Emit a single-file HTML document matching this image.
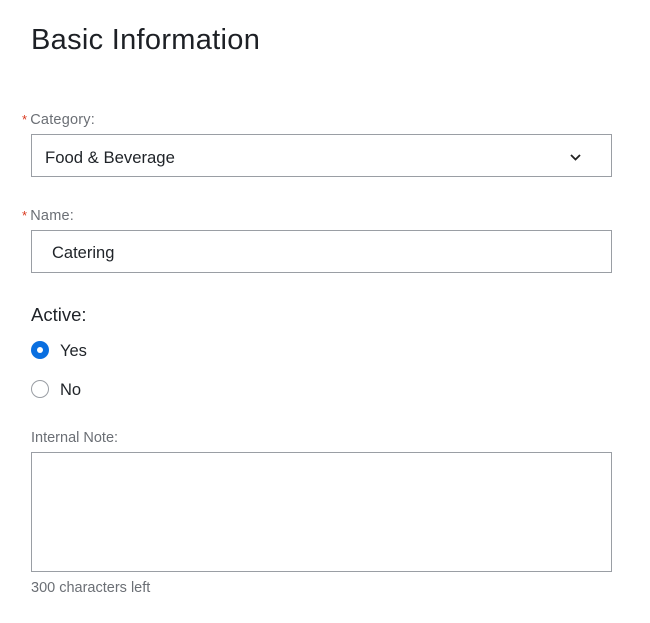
<!DOCTYPE html>
<html><head><style>
body{margin:0;background:#fff;font-family:"Liberation Sans",sans-serif;color:#1f2328;}
.a{position:absolute;}
.lbl{font-size:14.5px;color:#6b6f75;}
.req{color:#d9381e;font-size:13px;margin-right:3px;}
.box{position:absolute;left:31px;width:579px;border:1px solid #9a9ea4;background:#fff;}
</style></head><body>
<div class="a" style="left:31px;top:24px;font-size:29px;color:#1d2025;letter-spacing:0.3px;">Basic Information</div>
<div class="a lbl" style="left:22px;top:112px;letter-spacing:0.2px;"><span class="req">*</span>Category:</div>
<div class="box" style="top:134px;height:41px;"></div>
<div class="a" style="left:45px;top:148px;font-size:16.7px;">Food &amp; Beverage</div>
<svg class="a" style="left:570px;top:154px" width="11" height="7" viewBox="0 0 11 7"><path d="M1 1l4.5 4.5L10 1" fill="none" stroke="#222" stroke-width="1.8"/></svg>
<div class="a lbl" style="left:22px;top:208px;letter-spacing:0.2px;"><span class="req">*</span>Name:</div>
<div class="box" style="top:230px;height:41px;"></div>
<div class="a" style="left:52px;top:244px;font-size:16.5px;">Catering</div>
<div class="a" style="left:31px;top:304px;font-size:18.5px;">Active:</div>
<div class="a" style="left:31px;top:341px;width:18px;height:18px;border-radius:50%;background:#0a6fe0;"></div>
<div class="a" style="left:37px;top:347px;width:6px;height:6px;border-radius:50%;background:#fff;"></div>
<div class="a" style="left:60px;top:342px;font-size:16.5px;">Yes</div>
<div class="a" style="left:31px;top:380px;width:16px;height:16px;border-radius:50%;border:1px solid #9a9ea4;"></div>
<div class="a" style="left:60px;top:381px;font-size:16.5px;">No</div>
<div class="a lbl" style="left:31px;top:430px;">Internal Note:</div>
<div class="box" style="top:452px;height:118px;"></div>
<div class="a lbl" style="left:31px;top:580px;">300 characters left</div>
</body></html>
